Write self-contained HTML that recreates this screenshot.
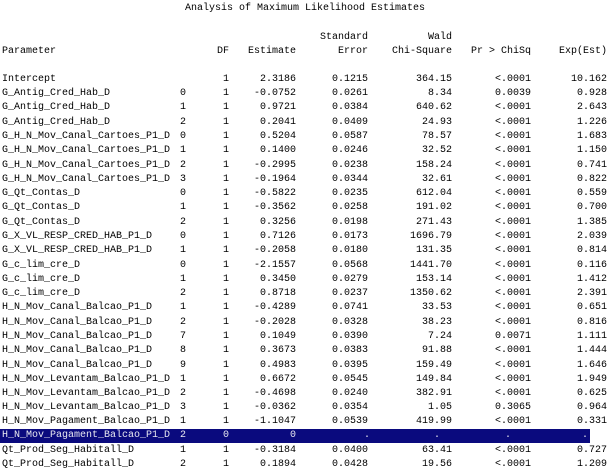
<!DOCTYPE html>
<html><head><meta charset="utf-8"><style>
html,body{margin:0;padding:0;background:#fff;width:611px;height:471px;overflow:hidden}
body{position:relative;font-family:"Liberation Mono",monospace;font-size:10px;color:#000}
.t{position:absolute;white-space:pre;line-height:12px}
.r{position:absolute;left:0;width:611px;height:14px;line-height:14px;white-space:pre}
.r span{position:absolute;top:0}
.n{left:2px}.c{left:180px}
.d{right:382px}.e{right:315px}.s{right:243px}.w{right:159px}.p{right:80px}.x{right:4px}
.sel{background:#0a0a7e;color:#e8e8f0;width:590px}
</style></head><body>
<div class="t" style="left:185px;top:3px">Analysis of Maximum Likelihood Estimates</div>
<div class="t" style="right:243px;top:32px">Standard</div>
<div class="t" style="right:159px;top:32px">Wald</div>
<div class="t" style="left:2px;top:46px">Parameter</div>
<div class="t" style="right:382px;top:46px">DF</div>
<div class="t" style="right:315px;top:46px">Estimate</div>
<div class="t" style="right:243px;top:46px">Error</div>
<div class="t" style="right:159px;top:46px">Chi-Square</div>
<div class="t" style="right:80px;top:46px">Pr &gt; ChiSq</div>
<div class="t" style="right:4px;top:46px">Exp(Est)</div>

<div class="r" style="top:73px"><span class="n">Intercept</span><span class="c"></span><span class="d">1</span><span class="e">2.3186</span><span class="s">0.1215</span><span class="w">364.15</span><span class="p">&lt;.0001</span><span class="x">10.162</span></div>
<div class="r" style="top:87px"><span class="n">G_Antig_Cred_Hab_D</span><span class="c">0</span><span class="d">1</span><span class="e">-0.0752</span><span class="s">0.0261</span><span class="w">8.34</span><span class="p">0.0039</span><span class="x">0.928</span></div>
<div class="r" style="top:101px"><span class="n">G_Antig_Cred_Hab_D</span><span class="c">1</span><span class="d">1</span><span class="e">0.9721</span><span class="s">0.0384</span><span class="w">640.62</span><span class="p">&lt;.0001</span><span class="x">2.643</span></div>
<div class="r" style="top:116px"><span class="n">G_Antig_Cred_Hab_D</span><span class="c">2</span><span class="d">1</span><span class="e">0.2041</span><span class="s">0.0409</span><span class="w">24.93</span><span class="p">&lt;.0001</span><span class="x">1.226</span></div>
<div class="r" style="top:130px"><span class="n">G_H_N_Mov_Canal_Cartoes_P1_D</span><span class="c">0</span><span class="d">1</span><span class="e">0.5204</span><span class="s">0.0587</span><span class="w">78.57</span><span class="p">&lt;.0001</span><span class="x">1.683</span></div>
<div class="r" style="top:144px"><span class="n">G_H_N_Mov_Canal_Cartoes_P1_D</span><span class="c">1</span><span class="d">1</span><span class="e">0.1400</span><span class="s">0.0246</span><span class="w">32.52</span><span class="p">&lt;.0001</span><span class="x">1.150</span></div>
<div class="r" style="top:159px"><span class="n">G_H_N_Mov_Canal_Cartoes_P1_D</span><span class="c">2</span><span class="d">1</span><span class="e">-0.2995</span><span class="s">0.0238</span><span class="w">158.24</span><span class="p">&lt;.0001</span><span class="x">0.741</span></div>
<div class="r" style="top:173px"><span class="n">G_H_N_Mov_Canal_Cartoes_P1_D</span><span class="c">3</span><span class="d">1</span><span class="e">-0.1964</span><span class="s">0.0344</span><span class="w">32.61</span><span class="p">&lt;.0001</span><span class="x">0.822</span></div>
<div class="r" style="top:187px"><span class="n">G_Qt_Contas_D</span><span class="c">0</span><span class="d">1</span><span class="e">-0.5822</span><span class="s">0.0235</span><span class="w">612.04</span><span class="p">&lt;.0001</span><span class="x">0.559</span></div>
<div class="r" style="top:201px"><span class="n">G_Qt_Contas_D</span><span class="c">1</span><span class="d">1</span><span class="e">-0.3562</span><span class="s">0.0258</span><span class="w">191.02</span><span class="p">&lt;.0001</span><span class="x">0.700</span></div>
<div class="r" style="top:216px"><span class="n">G_Qt_Contas_D</span><span class="c">2</span><span class="d">1</span><span class="e">0.3256</span><span class="s">0.0198</span><span class="w">271.43</span><span class="p">&lt;.0001</span><span class="x">1.385</span></div>
<div class="r" style="top:230px"><span class="n">G_X_VL_RESP_CRED_HAB_P1_D</span><span class="c">0</span><span class="d">1</span><span class="e">0.7126</span><span class="s">0.0173</span><span class="w">1696.79</span><span class="p">&lt;.0001</span><span class="x">2.039</span></div>
<div class="r" style="top:244px"><span class="n">G_X_VL_RESP_CRED_HAB_P1_D</span><span class="c">1</span><span class="d">1</span><span class="e">-0.2058</span><span class="s">0.0180</span><span class="w">131.35</span><span class="p">&lt;.0001</span><span class="x">0.814</span></div>
<div class="r" style="top:259px"><span class="n">G_c_lim_cre_D</span><span class="c">0</span><span class="d">1</span><span class="e">-2.1557</span><span class="s">0.0568</span><span class="w">1441.70</span><span class="p">&lt;.0001</span><span class="x">0.116</span></div>
<div class="r" style="top:273px"><span class="n">G_c_lim_cre_D</span><span class="c">1</span><span class="d">1</span><span class="e">0.3450</span><span class="s">0.0279</span><span class="w">153.14</span><span class="p">&lt;.0001</span><span class="x">1.412</span></div>
<div class="r" style="top:287px"><span class="n">G_c_lim_cre_D</span><span class="c">2</span><span class="d">1</span><span class="e">0.8718</span><span class="s">0.0237</span><span class="w">1350.62</span><span class="p">&lt;.0001</span><span class="x">2.391</span></div>
<div class="r" style="top:301px"><span class="n">H_N_Mov_Canal_Balcao_P1_D</span><span class="c">1</span><span class="d">1</span><span class="e">-0.4289</span><span class="s">0.0741</span><span class="w">33.53</span><span class="p">&lt;.0001</span><span class="x">0.651</span></div>
<div class="r" style="top:316px"><span class="n">H_N_Mov_Canal_Balcao_P1_D</span><span class="c">2</span><span class="d">1</span><span class="e">-0.2028</span><span class="s">0.0328</span><span class="w">38.23</span><span class="p">&lt;.0001</span><span class="x">0.816</span></div>
<div class="r" style="top:330px"><span class="n">H_N_Mov_Canal_Balcao_P1_D</span><span class="c">7</span><span class="d">1</span><span class="e">0.1049</span><span class="s">0.0390</span><span class="w">7.24</span><span class="p">0.0071</span><span class="x">1.111</span></div>
<div class="r" style="top:344px"><span class="n">H_N_Mov_Canal_Balcao_P1_D</span><span class="c">8</span><span class="d">1</span><span class="e">0.3673</span><span class="s">0.0383</span><span class="w">91.88</span><span class="p">&lt;.0001</span><span class="x">1.444</span></div>
<div class="r" style="top:359px"><span class="n">H_N_Mov_Canal_Balcao_P1_D</span><span class="c">9</span><span class="d">1</span><span class="e">0.4983</span><span class="s">0.0395</span><span class="w">159.49</span><span class="p">&lt;.0001</span><span class="x">1.646</span></div>
<div class="r" style="top:373px"><span class="n">H_N_Mov_Levantam_Balcao_P1_D</span><span class="c">1</span><span class="d">1</span><span class="e">0.6672</span><span class="s">0.0545</span><span class="w">149.84</span><span class="p">&lt;.0001</span><span class="x">1.949</span></div>
<div class="r" style="top:387px"><span class="n">H_N_Mov_Levantam_Balcao_P1_D</span><span class="c">2</span><span class="d">1</span><span class="e">-0.4698</span><span class="s">0.0240</span><span class="w">382.91</span><span class="p">&lt;.0001</span><span class="x">0.625</span></div>
<div class="r" style="top:401px"><span class="n">H_N_Mov_Levantam_Balcao_P1_D</span><span class="c">3</span><span class="d">1</span><span class="e">-0.0362</span><span class="s">0.0354</span><span class="w">1.05</span><span class="p">0.3065</span><span class="x">0.964</span></div>
<div class="r" style="top:415px"><span class="n">H_N_Mov_Pagament_Balcao_P1_D</span><span class="c">1</span><span class="d">1</span><span class="e">-1.1047</span><span class="s">0.0539</span><span class="w">419.99</span><span class="p">&lt;.0001</span><span class="x">0.331</span></div>
<div class="r sel" style="top:429px"><span class="n">H_N_Mov_Pagament_Balcao_P1_D</span><span class="c">2</span><span class="d" style="right:361px">0</span><span class="e" style="right:294px">0</span><span class="s" style="right:220px">.</span><span class="w" style="right:150px">.</span><span class="p" style="right:79px">.</span><span class="x" style="right:2px">.</span></div>
<div class="r" style="top:444px"><span class="n">Qt_Prod_Seg_Habitall_D</span><span class="c">1</span><span class="d">1</span><span class="e">-0.3184</span><span class="s">0.0400</span><span class="w">63.41</span><span class="p">&lt;.0001</span><span class="x">0.727</span></div>
<div class="r" style="top:458px"><span class="n">Qt_Prod_Seg_Habitall_D</span><span class="c">2</span><span class="d">1</span><span class="e">0.1894</span><span class="s">0.0428</span><span class="w">19.56</span><span class="p">&lt;.0001</span><span class="x">1.209</span></div>
</body></html>
